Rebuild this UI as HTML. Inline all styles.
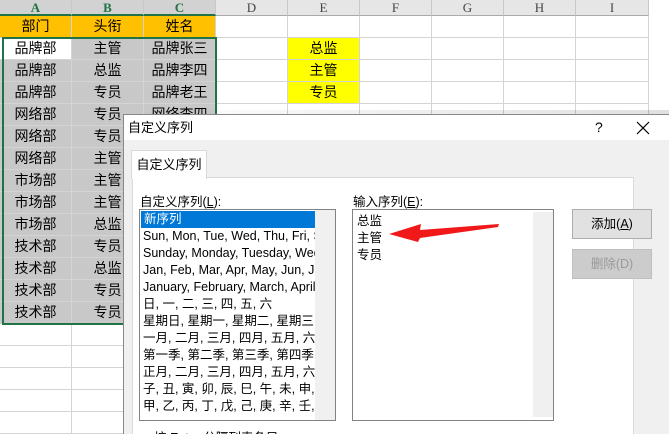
<!DOCTYPE html><html style="overflow:hidden;height:434px"><head><style>
body{margin:0;width:669px;height:434px;overflow:hidden;position:relative;background:#fff;font-family:"Liberation Sans","Noto Sans CJK SC",sans-serif}
.a{position:absolute}
.ch{position:absolute;top:0;height:16px;background:#e6e6e6;border-right:1px solid #c8c8c8;border-bottom:1px solid #aaa;box-sizing:border-box;text-align:center;font:13px/16px "Liberation Serif","DejaVu Serif",serif;color:#444}
.cell{position:absolute;box-sizing:border-box;border-right:1px solid #d4d4d4;border-bottom:1px solid #d4d4d4;text-align:center;font-size:14px;line-height:21px;color:#000}
.lst div{height:17px;line-height:17px;font-size:12.5px;white-space:nowrap;padding-left:3px}
</style></head><body>
<div class="ch" style="left:0;width:72px;background:#d2d2d2;color:#217346;font-weight:bold;border-bottom:2px solid #217346">A</div>
<div class="ch" style="left:72px;width:72px;background:#d2d2d2;color:#217346;font-weight:bold;border-bottom:2px solid #217346">B</div>
<div class="ch" style="left:144px;width:72px;background:#d2d2d2;color:#217346;font-weight:bold;border-bottom:2px solid #217346">C</div>
<div class="ch" style="left:216px;width:72px">D</div>
<div class="ch" style="left:288px;width:72px">E</div>
<div class="ch" style="left:360px;width:72px">F</div>
<div class="ch" style="left:432px;width:72px">G</div>
<div class="ch" style="left:504px;width:72px">H</div>
<div class="ch" style="left:576px;width:73px">I</div>
<div id="g"></div>
<script>
var g=document.getElementById('g'),h='';
var A=['部门','品牌部','品牌部','品牌部','网络部','网络部','网络部','市场部','市场部','市场部','技术部','技术部','技术部','技术部'];
var B=['头衔','主管','总监','专员','专员','专员','主管','主管','主管','总监','专员','总监','专员','专员'];
var C=['姓名','品牌张三','品牌李四','品牌老王','网络李四','','','','','','','','',''];
var E=['','总监','主管','专员'];
for(var r=0;r<19;r++){var y=16+r*22;
for(var c=0;c<9;c++){var x=c*72,bg='#fff',t='';
if(c<3&&r<14){t=[A,B,C][c][r];bg=r==0?'#ffc000':(r==1&&c==0?'#fff':'#c8c8c8');}
if(c==4&&r>=1&&r<=3){t=E[r];bg='#ffff00';}
h+='<div class="cell" style="left:'+x+'px;top:'+y+'px;width:'+(c==8?73:72)+'px;height:'+(y+22>434?434-y:22)+'px;background:'+bg+'">'+t+'</div>';}}
g.innerHTML=h;
</script>
<div class="a" style="left:2px;top:37px;width:211px;height:284px;border:2px solid #217346"></div>
<div class="a" style="left:118px;top:110px;width:551px;height:324px;background:linear-gradient(90deg,rgba(0,0,0,0),rgba(0,0,0,.12));"></div>
<div class="a" style="left:123px;top:114px;width:546px;height:320px;background:#f0f0f0;border-left:1px solid #888;border-top:1px solid #888;box-sizing:border-box;overflow:hidden">
<div class="a" style="left:0;top:0;width:545px;height:25px;background:#fff;font-size:13px;line-height:26px;padding-left:4px">自定义序列</div>
<div class="a" style="left:471px;top:4px;font-size:14px">?</div>
<svg class="a" style="left:512px;top:6px" width="14" height="14"><path d="M1 1L13 13M13 1L1 13" stroke="#000" stroke-width="1.2"/></svg>
<div class="a" style="left:8px;top:62px;width:500px;height:280px;background:#fff;border:1px solid #d9d9d9"></div>
<div class="a" style="left:7px;top:35px;width:74px;height:28px;background:#fff;border:1px solid #d9d9d9;border-bottom:none;font-size:13px;line-height:28px;text-align:center">自定义序列</div>
<div class="a" style="left:16px;top:76px;font-size:12.5px">自定义序列(<u>L</u>):</div>
<div class="a" style="left:229px;top:76px;font-size:12.5px">输入序列(<u>E</u>):</div>
<div class="a lst" style="left:15px;top:94px;width:195px;height:210px;background:#fff;border:1px solid #828282;overflow:hidden">
<div style="position:absolute;right:0;top:0;width:17px;height:210px;background:#f0f0f0"></div>
<div style="width:178px;background:#0078d7;color:#fff;margin:1px 0 0 1px">新序列</div>
<div>Sun, Mon, Tue, Wed, Thu, Fri, S</div><div>Sunday, Monday, Tuesday, Wed</div><div>Jan, Feb, Mar, Apr, May, Jun, Ju</div><div>January, February, March, April,</div><div>日, 一, 二, 三, 四, 五, 六</div><div>星期日, 星期一, 星期二, 星期三, 星</div><div>一月, 二月, 三月, 四月, 五月, 六月,</div><div>第一季, 第二季, 第三季, 第四季</div><div>正月, 二月, 三月, 四月, 五月, 六月,</div><div>子, 丑, 寅, 卯, 辰, 巳, 午, 未, 申, 酉</div><div>甲, 乙, 丙, 丁, 戊, 己, 庚, 辛, 壬, 癸</div>
</div>
<div class="a lst" style="left:228px;top:94px;width:200px;height:210px;background:#fff;border:1px solid #828282">
<div style="position:absolute;right:0;top:2px;width:17px;height:205px;background:#f0f0f0"></div>
<div style="margin-top:3px;padding-left:4px">总监</div><div style="padding-left:4px">主管</div><div style="padding-left:4px">专员</div></div>
<div class="a" style="left:448px;top:94px;width:78px;height:28px;background:#e1e1e1;border:1px solid #adadad;font-size:12.5px;line-height:28px;text-align:center">添加(<u>A</u>)</div>
<div class="a" style="left:448px;top:134px;width:78px;height:28px;background:#cccccc;border:1px solid #bfbfbf;color:#9a9a9a;font-size:12.5px;line-height:28px;text-align:center">删除(D)</div>
<div class="a" style="left:30px;top:312px;font-size:12.5px">按 Enter 分隔列表条目</div>
</div>
<svg class="a" style="left:380px;top:220px" width="130" height="30"><polygon points="119,4 118,7 40,18 38,22 9,14 41,4 40,10" fill="#f01818"/></svg>
</body></html>
